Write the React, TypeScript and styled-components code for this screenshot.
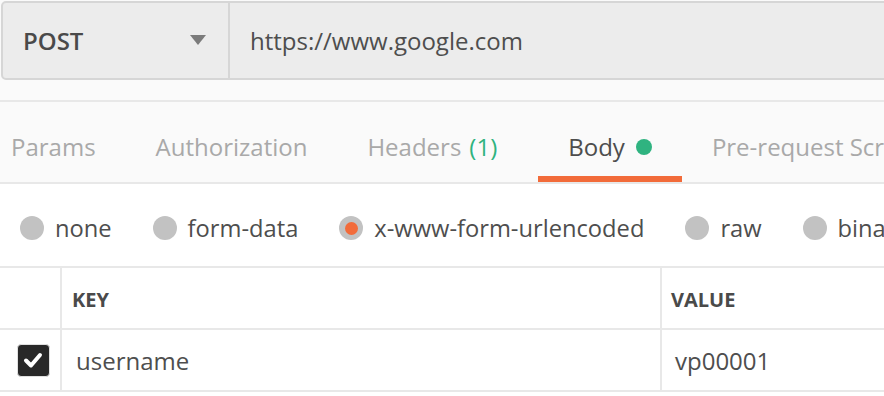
import { createGlobalStyle, styled } from 'styled-components';

const GlobalStyle = createGlobalStyle`
  html, body {
    margin: 0;
    padding: 0;
    background: #ffffff;
    font-family: 'Open Sans', 'Noto Sans', sans-serif;
    color: #505050;
  }
`;

const tabs = [
  { label: 'Params' },
  { label: 'Authorization' },
  { label: 'Headers', count: 1 },
  { label: 'Body', active: true, dot: true },
  { label: 'Pre-request Script' },
];

const bodyModes = [
  { label: 'none' },
  { label: 'form-data' },
  { label: 'x-www-form-urlencoded', checked: true },
  { label: 'raw' },
  { label: 'binary' },
];

const rows = [{ key: 'username', value: 'vp00001', enabled: true }];

export default function App() {
  return (
    <>
      <GlobalStyle />
      <Page>
        <Header>
          <UrlBar>
            <MethodSelect>
              <MethodLabel>POST</MethodLabel>
              <Caret />
            </MethodSelect>
            <UrlText>https://www.google.com</UrlText>
          </UrlBar>
        </Header>

        <TabBar>
          {tabs.map((tab) => (
            <Tab key={tab.label} $active={!!tab.active}>
              {tab.label}
              {tab.count !== undefined && <Count>({tab.count})</Count>}
              {tab.dot && <Dot />}
            </Tab>
          ))}
        </TabBar>

        <ModeRow>
          {bodyModes.map((mode) => (
            <ModeOption key={mode.label}>
              <Radio $checked={!!mode.checked} />
              <span>{mode.label}</span>
            </ModeOption>
          ))}
        </ModeRow>

        <Table>
          <Row>
            <CheckCell />
            <HeadCell $indent={10}>KEY</HeadCell>
            <HeadCell $indent={9}>VALUE</HeadCell>
          </Row>
          {rows.map((row) => (
            <Row key={row.key}>
              <CheckCell>
                <Checkbox $checked={row.enabled}>
                  <svg width="22" height="22" viewBox="0 0 22 22">
                    <polyline
                      points="4,11.5 9,16.5 18,6"
                      fill="none"
                      stroke="#ffffff"
                      strokeWidth="4"
                      strokeLinecap="round"
                      strokeLinejoin="round"
                    />
                  </svg>
                </Checkbox>
              </CheckCell>
              <TextCell $indent={14}>{row.key}</TextCell>
              <TextCell $indent={13}>{row.value}</TextCell>
            </Row>
          ))}
        </Table>
      </Page>
    </>
  );
}

const Page = styled.div`
  width: 884px;
  height: 396px;
  overflow: hidden;
  font-size: 24px;
`;

const Header = styled.div`
  background: #fafafa;
  padding: 1px 0 20px 1px;
  border-bottom: 2px solid #e8e8e8;
`;

const UrlBar = styled.div`
  display: flex;
  height: 75px;
  width: 1000px;
  background: #ececec;
  border: 2px solid #d6d6d6;
  border-radius: 5px 0 0 5px;
`;

const MethodSelect = styled.div`
  width: 227px;
  display: flex;
  align-items: center;
  justify-content: space-between;
  padding: 0 22px 0 20px;
  box-sizing: border-box;
  border-right: 2px solid #d6d6d6;
`;

const MethodLabel = styled.span`
  font-weight: 600;
  color: #4a4a4a;
  margin-top: -1px;
`;

const Caret = styled.span`
  width: 0;
  height: 0;
  border-left: 8px solid transparent;
  border-right: 8px solid transparent;
  border-top: 10px solid #7b7b7b;
  margin-top: -1px;
`;

const UrlText = styled.span`
  display: flex;
  align-items: center;
  padding-left: 20px;
  margin-top: -1px;
  color: #4e4e4e;
  white-space: nowrap;
`;

const TabBar = styled.div`
  display: flex;
  height: 80px;
  background: #fafafa;
  border-bottom: 2px solid #e8e8e8;
  white-space: nowrap;
`;

const Tab = styled.div<{ $active: boolean }>`
  position: relative;
  display: flex;
  align-items: center;
  padding: 8px 30px 0;
  color: ${(p) => (p.$active ? '#4d4d4d' : '#a9a9a9')};

  &:first-child {
    margin-left: -19px;
  }

  &::after {
    content: '';
    display: ${(p) => (p.$active ? 'block' : 'none')};
    position: absolute;
    left: 0;
    right: 0;
    bottom: 0;
    height: 6px;
    background: #f26b3a;
  }
`;

const Count = styled.span`
  color: #2eb37f;
  margin: 0 11px 0 8px;
`;

const Dot = styled.span`
  width: 16px;
  height: 16px;
  border-radius: 50%;
  background: #2fb380;
  margin: 2px 0 0 11px;
`;

const ModeRow = styled.div`
  display: flex;
  align-items: center;
  gap: 41px;
  height: 82px;
  padding-left: 20px;
  border-bottom: 2px solid #e8e8e8;
  font-size: 23.7px;
  white-space: nowrap;
`;

const ModeOption = styled.label`
  display: flex;
  align-items: center;
  gap: 11px;
  color: #4e4e4e;
  margin-top: 6px;
`;

const Radio = styled.span<{ $checked: boolean }>`
  position: relative;
  flex: none;
  width: 24px;
  height: 24px;
  border-radius: 50%;
  background: #c2c2c2;

  &::after {
    content: '';
    display: ${(p) => (p.$checked ? 'block' : 'none')};
    position: absolute;
    left: 5.5px;
    top: 5.5px;
    width: 13px;
    height: 13px;
    border-radius: 50%;
    background: #f26b3a;
  }
`;

const Table = styled.div`
  display: flex;
  flex-direction: column;
`;

const Row = styled.div`
  display: grid;
  grid-template-columns: 60px 600px 1fr;
  height: 60px;
  border-bottom: 2px solid #e8e8e8;

  & > * + * {
    border-left: 2px solid #e8e8e8;
  }
`;

const CheckCell = styled.div`
  display: flex;
  align-items: center;
  justify-content: center;
  padding-left: 6px;
`;

const HeadCell = styled.div<{ $indent: number }>`
  display: flex;
  align-items: center;
  padding: 2px 0 0 ${(p) => p.$indent}px;
  font-size: 20px;
  font-weight: 700;
  color: #4a4a4a;
`;

const Checkbox = styled.span<{ $checked: boolean }>`
  display: flex;
  align-items: center;
  justify-content: center;
  width: 33px;
  height: 33px;
  box-sizing: border-box;
  border-radius: 4px;
  border: 1px solid #e0e0e0;
  background: ${(p) => (p.$checked ? '#282828' : '#ffffff')};
`;

const TextCell = styled.div<{ $indent: number }>`
  display: flex;
  align-items: center;
  padding-left: ${(p) => p.$indent}px;
  color: #4e4e4e;
`;
